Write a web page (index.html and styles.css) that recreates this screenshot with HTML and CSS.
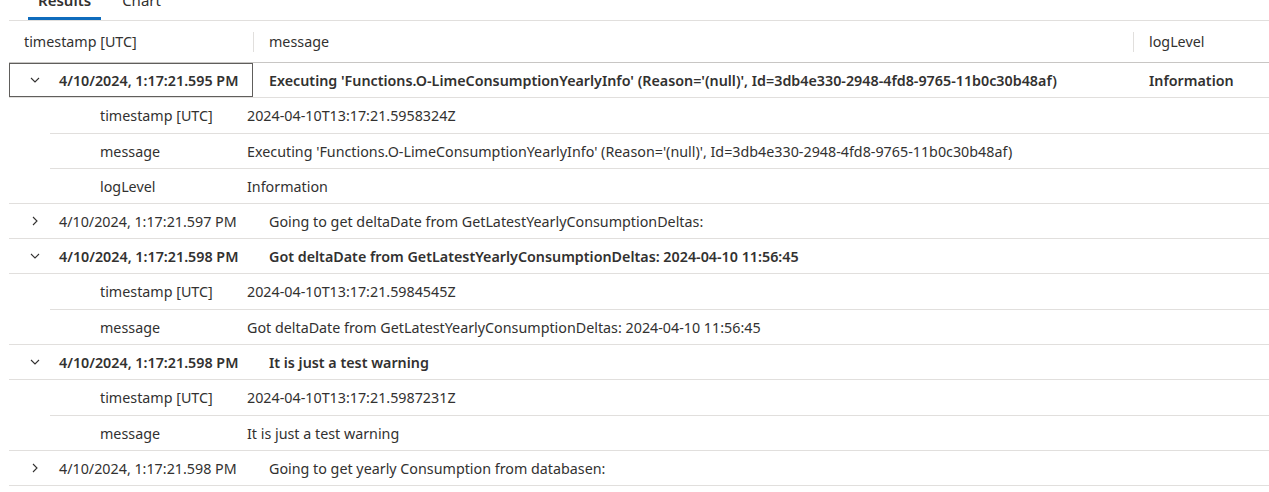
FILE: index.html
```html
<!DOCTYPE html>
<html>
<head>
<meta charset="utf-8">
<link rel="stylesheet" href="styles.css">
</head>
<body>
<div class="tabbar">
  <div class="tab active">Results</div>
  <div class="tab">Chart</div>
</div>
<div class="table">
  <div class="head">
    <div class="hcell first">timestamp [UTC]</div>
    <div class="hcell sep">message</div>
    <div class="hcell sep">logLevel</div>
  </div>

  <div class="row bold">
    <div class="cell first focused"><svg class="chev" width="10" height="10" viewBox="0 0 10 10"><path d="M1 3 L5 7 L9 3" /></svg><span>4/10/2024, 1:17:21.595 PM</span></div>
    <div class="cell msg">Executing 'Functions.O-LimeConsumptionYearlyInfo' (Reason='(null)', Id=3db4e330-2948-4fd8-9765-11b0c30b48af)</div>
    <div class="cell lvl">Information</div>
  </div>
  <div class="details">
    <div class="drow"><div class="dlabel">timestamp [UTC]</div><div class="dval">2024-04-10T13:17:21.5958324Z</div></div>
    <div class="drow"><div class="dlabel">message</div><div class="dval">Executing 'Functions.O-LimeConsumptionYearlyInfo' (Reason='(null)', Id=3db4e330-2948-4fd8-9765-11b0c30b48af)</div></div>
    <div class="drow"><div class="dlabel">logLevel</div><div class="dval">Information</div></div>
  </div>

  <div class="row">
    <div class="cell first"><svg class="chev" width="10" height="10" viewBox="0 0 10 10"><path d="M3 1 L7 5 L3 9" /></svg><span>4/10/2024, 1:17:21.597 PM</span></div>
    <div class="cell msg">Going to get deltaDate from GetLatestYearlyConsumptionDeltas:</div>
    <div class="cell lvl"></div>
  </div>

  <div class="row bold">
    <div class="cell first"><svg class="chev" width="10" height="10" viewBox="0 0 10 10"><path d="M1 3 L5 7 L9 3" /></svg><span>4/10/2024, 1:17:21.598 PM</span></div>
    <div class="cell msg">Got deltaDate from GetLatestYearlyConsumptionDeltas: 2024-04-10 11:56:45</div>
    <div class="cell lvl"></div>
  </div>
  <div class="details">
    <div class="drow"><div class="dlabel">timestamp [UTC]</div><div class="dval">2024-04-10T13:17:21.5984545Z</div></div>
    <div class="drow"><div class="dlabel">message</div><div class="dval">Got deltaDate from GetLatestYearlyConsumptionDeltas: 2024-04-10 11:56:45</div></div>
  </div>

  <div class="row bold">
    <div class="cell first"><svg class="chev" width="10" height="10" viewBox="0 0 10 10"><path d="M1 3 L5 7 L9 3" /></svg><span>4/10/2024, 1:17:21.598 PM</span></div>
    <div class="cell msg">It is just a test warning</div>
    <div class="cell lvl"></div>
  </div>
  <div class="details">
    <div class="drow"><div class="dlabel">timestamp [UTC]</div><div class="dval">2024-04-10T13:17:21.5987231Z</div></div>
    <div class="drow"><div class="dlabel">message</div><div class="dval">It is just a test warning</div></div>
  </div>

  <div class="row">
    <div class="cell first"><svg class="chev" width="10" height="10" viewBox="0 0 10 10"><path d="M3 1 L7 5 L3 9" /></svg><span>4/10/2024, 1:17:21.598 PM</span></div>
    <div class="cell msg">Going to get yearly Consumption from databasen:</div>
    <div class="cell lvl"></div>
  </div>
</div>
</body>
</html>
```
FILE: styles.css
```css
html, body {
  margin: 0;
  padding: 0;
  background: #ffffff;
}
body {
  font-family: "Noto Sans", "Open Sans", sans-serif;
  font-size: 14.3px;
  color: #323130;
  overflow: hidden;
}
.tabbar {
  height: 20px;
  margin-left: 9px;
  padding-left: 19px;
  display: flex;
  align-items: flex-end;
  gap: 11px;
  border-bottom: 1px solid #e1dfdd;
  overflow: hidden;
}
.tab {
  font-size: 15px;
  line-height: 20px;
  padding: 0 10px 7px;
  border-bottom: 3px solid transparent;
}
.tab.active {
  font-weight: 600;
  border-bottom-color: #0f6cbd;
}
.table {
  margin-left: 9px;
}
.head {
  display: grid;
  grid-template-columns: 244px 880px 1fr;
  height: 41px;
  border-bottom: 1px solid #c8c6c4;
  align-items: center;
}
.hcell {
  display: flex;
  align-items: center;
  height: 20px;
  white-space: nowrap;
}
.hcell.first {
  padding-left: 15px;
}
.hcell.sep {
  border-left: 1px solid #e1dfdd;
  padding-left: 15px;
}
.row {
  display: grid;
  grid-template-columns: 244px 880px 1fr;
  height: 35px;
  border-bottom: 1px solid #e1dfdd;
  box-sizing: border-box;
}
.row.bold {
  font-weight: 600;
}
.cell {
  display: flex;
  align-items: center;
  white-space: nowrap;
}
.cell.first {
  padding-left: 21px;
}
.cell.focused {
  box-shadow: inset 0 0 0 1px #605e5c;
}
.cell.msg {
  padding-left: 16px;
}
.cell.lvl {
  padding-left: 16px;
}
.chev {
  margin-right: 19px;
  flex: none;
}
.chev path {
  fill: none;
  stroke: #323130;
  stroke-width: 1.1;
}
.details {
  border-bottom: 1px solid #e1dfdd;
}
.drow {
  margin-left: 41px;
  display: grid;
  grid-template-columns: 197px 1fr;
  height: 35px;
  box-sizing: border-box;
  align-items: center;
  white-space: nowrap;
}
.drow + .drow {
  border-top: 1px solid #e1dfdd;
}
.dlabel {
  padding-left: 50px;
}
```
